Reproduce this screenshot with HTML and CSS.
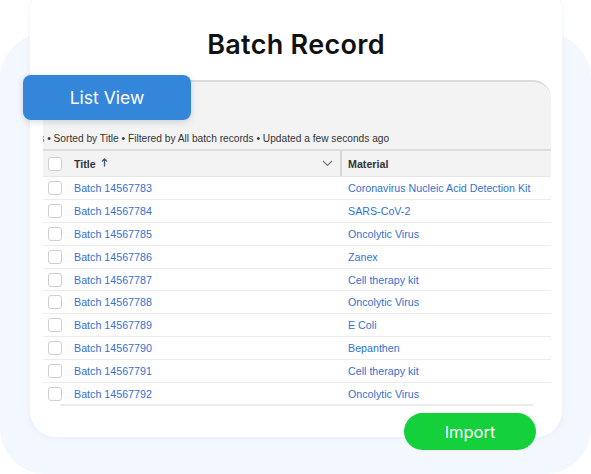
FILE: index.html
```html
<!DOCTYPE html>
<html>
<head>
<meta charset="utf-8">
<link rel="stylesheet" href="styles.css">
</head>
<body>
<div class="stage">
  <div class="card">
    <h1 class="title">Batch Record</h1>
    <div class="panel">
      <div class="panel-head">
        <div class="meta"><span class="meta-cut">items</span> • Sorted by Title • Filtered by All batch records • Updated a few seconds ago</div>
      </div>
      <div class="thead">
        <div class="cell-check"><span class="box"></span></div>
        <div class="col-title th">
          <span>Title</span>
          <svg class="arrow" width="7" height="9" viewBox="0 0 7 9"><path d="M3.5 8.5V1M1 3.5L3.5 1 6 3.5" fill="none" stroke="#3d5a80" stroke-width="1.3"/></svg>
          <svg class="chev" width="11" height="7" viewBox="0 0 11 7"><path d="M1 1l4.5 4.5L10 1" fill="none" stroke="#777" stroke-width="1.1"/></svg>
        </div>
        <div class="col-mat th">Material</div>
      </div>
      <div class="rows">
        <div class="row"><div class="cell-check"><span class="box"></span></div><div class="col-title link">Batch 14567783</div><div class="col-mat link">Coronavirus Nucleic Acid Detection Kit</div></div>
        <div class="row"><div class="cell-check"><span class="box"></span></div><div class="col-title link">Batch 14567784</div><div class="col-mat link">SARS-CoV-2</div></div>
        <div class="row"><div class="cell-check"><span class="box"></span></div><div class="col-title link">Batch 14567785</div><div class="col-mat link">Oncolytic Virus</div></div>
        <div class="row"><div class="cell-check"><span class="box"></span></div><div class="col-title link">Batch 14567786</div><div class="col-mat link">Zanex</div></div>
        <div class="row"><div class="cell-check"><span class="box"></span></div><div class="col-title link">Batch 14567787</div><div class="col-mat link">Cell therapy kit</div></div>
        <div class="row"><div class="cell-check"><span class="box"></span></div><div class="col-title link">Batch 14567788</div><div class="col-mat link">Oncolytic Virus</div></div>
        <div class="row"><div class="cell-check"><span class="box"></span></div><div class="col-title link">Batch 14567789</div><div class="col-mat link">E Coli</div></div>
        <div class="row"><div class="cell-check"><span class="box"></span></div><div class="col-title link">Batch 14567790</div><div class="col-mat link">Bepanthen</div></div>
        <div class="row"><div class="cell-check"><span class="box"></span></div><div class="col-title link">Batch 14567791</div><div class="col-mat link">Cell therapy kit</div></div>
        <div class="row last"><div class="cell-check"><span class="box"></span></div><div class="col-title link">Batch 14567792</div><div class="col-mat link">Oncolytic Virus</div></div>
      </div>
    </div>
  </div>
  <div class="btn-list">List View</div>
  <div class="btn-import">Import</div>
</div>
</body>
</html>
```
FILE: styles.css
```css
html, body {
  margin: 0;
  padding: 0;
  background: #ffffff;
}
.stage {
  position: relative;
  width: 591px;
  height: 474px;
  overflow: hidden;
}
.stage::before {
  content: "";
  position: absolute;
  left: 0;
  top: 33px;
  width: 591px;
  height: 441px;
  background: #f3f7fe;
  border-radius: 46px;
}
.card {
  position: relative;
  z-index: 1;
  margin: -14px 0 0 30px;
  width: 532px;
  height: 451px;
  background: #ffffff;
  border-radius: 26px;
  box-shadow: 0 0 6px rgba(200, 210, 225, 0.25);
  padding-top: 30px;
  box-sizing: border-box;
  overflow: hidden;
}
.title {
  margin: 0;
  text-align: center;
  font-family: "Inter", sans-serif;
  font-weight: 600;
  font-size: 27px;
  line-height: 58px;
  color: #111;
  letter-spacing: 0.3px;
  padding-bottom: 6px;
}
.panel {
  margin-left: 13px;
  width: 508px;
  border-top: 2px solid #dcdcdc;
  border-top-right-radius: 18px;
  background: #f3f3f3;
  overflow: hidden;
  font-family: "Liberation Sans", Arial, sans-serif;
  font-size: 10.7px;
}
.panel-head {
  height: 67px;
  display: flex;
  align-items: flex-end;
  border-bottom: 2px solid #dedede;
}
.meta {
  margin-left: -23px;
  padding-bottom: 5px;
  color: #333;
  white-space: nowrap;
  font-size: 10.2px;
}
.meta-cut {
  color: #555;
}
.thead {
  display: flex;
  align-items: center;
  height: 25px;
  background: #f3f3f3;
  border-bottom: 1px solid #e6e6e6;
}
.th {
  font-weight: bold;
  color: #333;
}
.cell-check {
  width: 31px;
  display: flex;
  align-items: center;
  padding-left: 5px;
  box-sizing: border-box;
}
.box {
  width: 12px;
  height: 12px;
  border: 1px solid #cfcfcf;
  border-radius: 3px;
  background: #fff;
}
.col-title {
  width: 268px;
  display: flex;
  align-items: center;
  box-sizing: border-box;
}
.thead .col-title {
  height: 25px;
  border-right: 2px solid #d6d6d6;
}
.arrow {
  margin-left: 5px;
  margin-top: -2px;
}
.chev {
  margin-left: auto;
  margin-right: 7px;
}
.col-mat {
  padding-left: 6px;
  flex: 1;
}
.rows {
  background: #ffffff;
}
.row {
  display: flex;
  align-items: center;
  height: 22.9px;
  border-bottom: 1.5px solid #ececec;
  box-sizing: border-box;
}
.row.last {
  border-bottom: none;
  position: relative;
}
.row.last::after {
  content: "";
  position: absolute;
  left: 17px;
  right: 18px;
  bottom: 0;
  height: 1.5px;
  background: #ececec;
}
.link {
  color: #3571cf;
}
.btn-list {
  position: absolute;
  z-index: 2;
  left: 23px;
  top: 75px;
  width: 168px;
  height: 45px;
  border-radius: 8px;
  background: #3386d9;
  color: #fff;
  font-family: "Inter", sans-serif;
  font-size: 17.5px;
  display: flex;
  align-items: center;
  justify-content: center;
  box-shadow: 0 2px 6px rgba(40, 60, 90, 0.18);
}
.btn-import {
  position: absolute;
  z-index: 2;
  left: 404px;
  top: 413px;
  width: 132px;
  height: 37px;
  border-radius: 19px;
  background: #14d13b;
  color: #fff;
  font-family: "Inter", sans-serif;
  font-size: 16.5px;
  display: flex;
  align-items: center;
  justify-content: center;
}
```
